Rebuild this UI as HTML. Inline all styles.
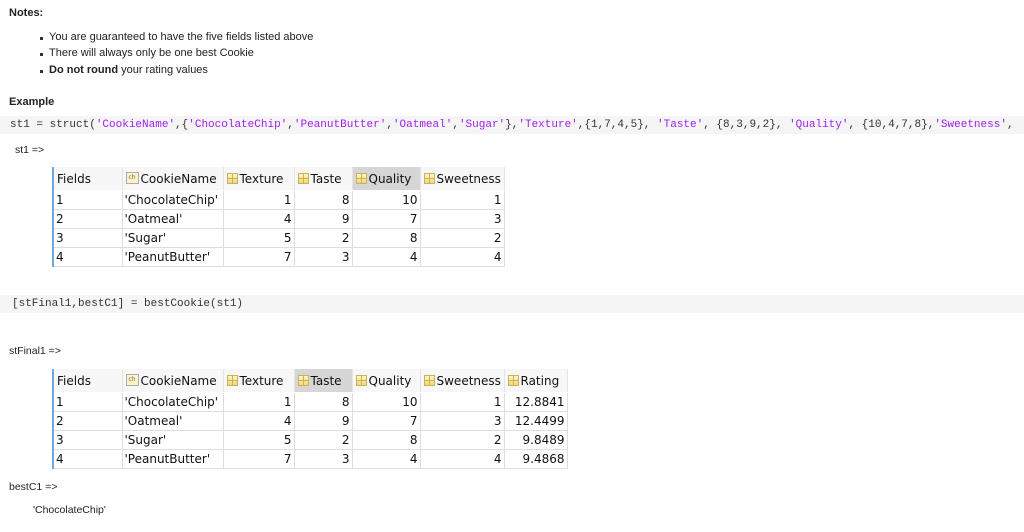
<!DOCTYPE html>
<html><head><meta charset="utf-8"><style>
body{margin:0;width:1024px;height:532px;background:#fff;position:relative;overflow:hidden;font-family:"Liberation Sans",Arial,sans-serif;color:#222}
.a{position:absolute;white-space:nowrap}
.s{font-size:11px}
.b{font-weight:bold}
.code{position:absolute;left:0;width:1024px;background:#f5f5f5;font-family:"Liberation Mono",monospace;font-size:11px;color:#333;white-space:nowrap;overflow:hidden;line-height:18px}
.p{color:#a020f0}
.bul{position:absolute;width:3px;height:3px;background:#333}
table{position:absolute;left:52px;border-collapse:collapse;font-family:"DejaVu Sans",sans-serif;font-size:12px;color:#111;table-layout:fixed;border-left:2px solid #6fa8dc}
td,th{border:1px solid #ddd;border-top:none;border-left:none;padding:0 2px;height:18px;line-height:18px;overflow:hidden;white-space:nowrap}
th{font-weight:normal;text-align:left;height:23px;background:#f7f7f7;border-right:1px solid #e4e4e4;border-bottom:1px solid #fff;padding-left:3px}
th.sel{background:#d6d6d6}
td{text-align:right}
td.l{text-align:left}
.ic{display:inline-block;width:9px;height:9px;border:1px solid #c9b25a;background:linear-gradient(#fff7c0,#f0d77a);position:relative;vertical-align:-1px;margin-right:2px}
.ic:before{content:"";position:absolute;left:4px;top:0;width:1px;height:9px;background:#c9b25a}
.ic:after{content:"";position:absolute;top:4px;left:0;height:1px;width:9px;background:#c9b25a}
.ic2{display:inline-block;width:11px;height:10px;border:1px solid #aab;background:#fff3c0;font-size:6px;line-height:10px;text-align:center;color:#666;vertical-align:middle;margin-right:2px;position:relative;top:-1px}
</style></head><body>
<div class="a s b" style="left:9px;top:7px">Notes:</div>
<div class="bul" style="left:40px;top:37px"></div><div class="a s" style="left:49px;top:31px">You are guaranteed to have the five fields listed above</div>
<div class="bul" style="left:40px;top:53px"></div><div class="a s" style="left:49px;top:47px">There will always only be one best Cookie</div>
<div class="bul" style="left:40px;top:70px"></div><div class="a s" style="left:49px;top:64px"><b>Do not round</b> your rating values</div>
<div class="a s b" style="left:9px;top:96px">Example</div>
<div class="code" style="top:116px;padding-left:10px">st1 = struct(<span class="p">'CookieName'</span>,{<span class="p">'ChocolateChip'</span>,<span class="p">'PeanutButter'</span>,<span class="p">'Oatmeal'</span>,<span class="p">'Sugar'</span>},<span class="p">'Texture'</span>,{1,7,4,5}, <span class="p">'Taste'</span>, {8,3,9,2}, <span class="p">'Quality'</span>, {10,4,7,8},<span class="p">'Sweetness'</span>,</div>
<div class="a" style="left:15px;top:144px;font-size:10.5px">st1 =&gt;</div>
<table style="top:167px;width:451px">
<colgroup><col style="width:69px"><col style="width:101px"><col style="width:71px"><col style="width:58px"><col style="width:68px"><col style="width:84px"></colgroup>
<tr><th>Fields</th><th><span class="ic2">ch</span>CookieName</th><th><span class="ic"></span>Texture</th><th><span class="ic"></span>Taste</th><th class="sel"><span class="ic"></span>Quality</th><th><span class="ic"></span>Sweetness</th></tr>
<tr><td class="l">1</td><td class="l">'ChocolateChip'</td><td>1</td><td>8</td><td>10</td><td>1</td></tr>
<tr><td class="l">2</td><td class="l">'Oatmeal'</td><td>4</td><td>9</td><td>7</td><td>3</td></tr>
<tr><td class="l">3</td><td class="l">'Sugar'</td><td>5</td><td>2</td><td>8</td><td>2</td></tr>
<tr><td class="l">4</td><td class="l">'PeanutButter'</td><td>7</td><td>3</td><td>4</td><td>4</td></tr>
</table>
<div class="code" style="top:295px;padding-left:12px">[stFinal1,bestC1] = bestCookie(st1)</div>
<div class="a" style="left:9px;top:345px;font-size:10.5px">stFinal1 =&gt;</div>
<table style="top:369px;width:514px">
<colgroup><col style="width:69px"><col style="width:101px"><col style="width:71px"><col style="width:58px"><col style="width:68px"><col style="width:84px"><col style="width:63px"></colgroup>
<tr><th>Fields</th><th><span class="ic2">ch</span>CookieName</th><th><span class="ic"></span>Texture</th><th class="sel"><span class="ic"></span>Taste</th><th><span class="ic"></span>Quality</th><th><span class="ic"></span>Sweetness</th><th><span class="ic"></span>Rating</th></tr>
<tr><td class="l">1</td><td class="l">'ChocolateChip'</td><td>1</td><td>8</td><td>10</td><td>1</td><td>12.8841</td></tr>
<tr><td class="l">2</td><td class="l">'Oatmeal'</td><td>4</td><td>9</td><td>7</td><td>3</td><td>12.4499</td></tr>
<tr><td class="l">3</td><td class="l">'Sugar'</td><td>5</td><td>2</td><td>8</td><td>2</td><td>9.8489</td></tr>
<tr><td class="l">4</td><td class="l">'PeanutButter'</td><td>7</td><td>3</td><td>4</td><td>4</td><td>9.4868</td></tr>
</table>
<div class="a" style="left:9px;top:481px;font-size:10.5px">bestC1 =&gt;</div>
<div class="a" style="left:33px;top:504px;font-size:10.5px">'ChocolateChip'</div>
</body></html>
